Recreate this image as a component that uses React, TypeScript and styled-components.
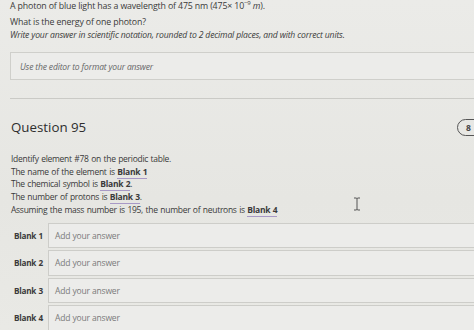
import React from "react";
import styled, { createGlobalStyle } from "styled-components";

const Global = createGlobalStyle`
  html, body { margin: 0; padding: 0; background: #e8e8e5; overflow: hidden; }
  body { font-family: "Open Sans", "Noto Sans", sans-serif; color: #3a3a3a; }
`;

const Page = styled.div`
  position: relative;
  width: 474px;
  height: 330px;
  overflow: hidden;
  background: linear-gradient(180deg, #ebebe8 0%, #e6e6e2 60%, #e9e9e5 100%);
  display: flex;
  flex-direction: column;
`;

const Top = styled.div`
  padding: 0 0 0 10px;
  display: flex;
  flex-direction: column;
`;

const Line = styled.div<{ $italic?: boolean; $mt?: number }>`
  font-size: ${(p) => (p.$italic ? 8.6 : 8.8)}px;
  letter-spacing: -0.15px;
  line-height: 13px;
  font-style: ${(p) => (p.$italic ? "italic" : "normal")};
  margin-top: ${(p) => p.$mt ?? 0}px;
  white-space: nowrap;
  color: #3a3a3a;
`;

const Sup = styled.sup`
  font-size: 6px;
  vertical-align: 4px;
  line-height: 0;
`;

const Editor = styled.div`
  margin-top: 10px;
  margin-right: -20px;
  height: 26px;
  border: 1px solid #cfcfcb;
  background: #ececea;
  display: flex;
  align-items: center;
  padding-left: 9px;
  font-size: 8.5px;
  letter-spacing: -0.15px;
  font-style: italic;
  color: #666;
`;

const Rule = styled.div`
  margin-top: 18px;
  height: 1px;
  background: #cacac6;
`;

const QHeader = styled.div`
  display: flex;
  align-items: center;
  justify-content: space-between;
  padding-left: 11px;
  margin-top: 19px;
`;

const QTitle = styled.div`
  font-size: 13.3px;
  color: #2e2e2e;
`;

const Pill = styled.div`
  width: 30px;
  height: 17px;
  border: 1.3px solid #555;
  border-radius: 9px;
  margin-right: -13px;
  display: flex;
  align-items: center;
  padding-left: 8px;
  box-sizing: border-box;
  font-size: 8.5px;
  font-weight: 700;
  color: #444;
`;

const Body = styled.div`
  padding-left: 11px;
  margin-top: 17px;
  display: flex;
  flex-direction: column;
`;

const BodyLine = styled.div`
  font-size: 8.5px;
  letter-spacing: -0.28px;
  word-spacing: 0.6px;
  line-height: 12.7px;
  white-space: nowrap;
  color: #3a3a3a;
`;

const BlankRef = styled.span`
  font-weight: 700;
  color: #3a3a3a;
  border-bottom: 1.5px solid #a899c6;
  padding-bottom: 1px;
`;

const Rows = styled.div`
  margin-top: 7px;
  display: flex;
  flex-direction: column;
  gap: 4px;
`;

const Row = styled.div`
  display: flex;
  align-items: center;
  height: 23.5px;
`;

const Label = styled.div`
  width: 48px;
  box-sizing: border-box;
  padding-left: 14px;
  font-size: 8.2px;
  letter-spacing: -0.25px;
  word-spacing: 0.5px;
  font-weight: 700;
  color: #3a3a3a;
  white-space: nowrap;
`;

const Input = styled.div`
  flex: 1;
  height: 100%;
  margin-right: -10px;
  border: 1px solid #cdcdc9;
  background: #ececea;
  display: flex;
  align-items: center;
  padding-left: 6px;
  font-size: 8.5px;
  letter-spacing: -0.15px;
  color: #7a7a7a;
`;

const Cursor = styled.svg`
  position: absolute;
  left: 353px;
  top: 197px;
`;

export default function App() {
  return (
    <>
      <Global />
      <Page>
        <Top>
          <Line>
            A photon of blue light has a wavelength of 475 nm (475× 10<Sup>−9</Sup> <i>m</i>).
          </Line>
          <Line $mt={3}>What is the energy of one photon?</Line>
          <Line $italic>
            Write your answer in scientific notation, rounded to 2 decimal places, and with correct units.
          </Line>
          <Editor>Use the editor to format your answer</Editor>
          <Rule />
        </Top>
        <QHeader>
          <QTitle>Question 95</QTitle>
          <Pill>8</Pill>
        </QHeader>
        <Body>
          <BodyLine>Identify element #78 on the periodic table.</BodyLine>
          <BodyLine>
            The name of the element is <BlankRef>Blank 1</BlankRef>
          </BodyLine>
          <BodyLine>
            The chemical symbol is <BlankRef>Blank 2</BlankRef>.
          </BodyLine>
          <BodyLine>
            The number of protons is <BlankRef>Blank 3</BlankRef>.
          </BodyLine>
          <BodyLine>
            Assuming the mass number is 195, the number of neutrons is <BlankRef>Blank 4</BlankRef>
          </BodyLine>
        </Body>
        <Rows>
          {[1, 2, 3, 4].map((n) => (
            <Row key={n}>
              <Label>Blank {n}</Label>
              <Input>Add your answer</Input>
            </Row>
          ))}
        </Rows>
        <Cursor width="8" height="14" viewBox="0 0 8 14">
          <path d="M1 1h2.5L4 1.8 4.5 1H7M4 1.8V12.2M1 13h2.5L4 12.2 4.5 13H7" stroke="#555" strokeWidth="1" fill="none" />
        </Cursor>
      </Page>
    </>
  );
}
